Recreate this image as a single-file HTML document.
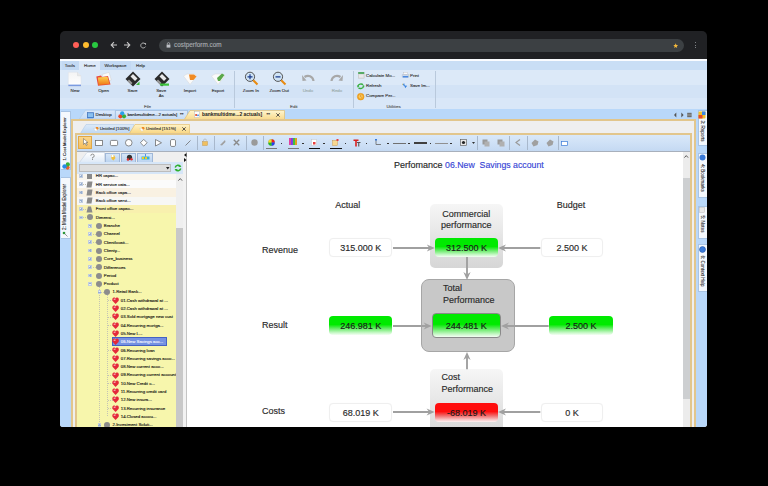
<!DOCTYPE html>
<html><head><meta charset="utf-8">
<style>
*{margin:0;padding:0;box-sizing:border-box}
html,body{width:768px;height:486px;background:#000;overflow:hidden;font-family:"Liberation Sans",sans-serif}
.a{position:absolute}
svg.a{overflow:visible}
#win{position:absolute;left:60px;top:31px;width:647px;height:396px;border-radius:5px 5px 3px 3px;overflow:hidden;background:#202124}
.t{position:absolute;white-space:nowrap;line-height:1}
.s{-webkit-text-stroke:0.12px currentColor}
.m{-webkit-text-stroke:0.15px currentColor}
</style></head><body>
<div id="win">
<div class="a" style="left:13.25px;top:11.00px;width:6.00px;height:6.00px;border-radius:50%;background:#ff5f57"></div>
<div class="a" style="left:22.80px;top:11.00px;width:6.00px;height:6.00px;border-radius:50%;background:#febc2e"></div>
<div class="a" style="left:32.00px;top:11.00px;width:6.00px;height:6.00px;border-radius:50%;background:#28c840"></div>
<svg class="a" style="left:50.00px;top:10.00px;" width="8" height="8" viewBox="0 0 8 8"><path d="M7 4H1.5M4 1.2L1.2 4L4 6.8" stroke="#c8c8c8" stroke-width="1.1" fill="none"/></svg>
<svg class="a" style="left:62.70px;top:10.00px;" width="8" height="8" viewBox="0 0 8 8"><path d="M1 4H6.5M4 1.2L6.8 4L4 6.8" stroke="#c8c8c8" stroke-width="1.1" fill="none"/></svg>
<svg class="a" style="left:79.50px;top:11.00px;" width="7" height="7" viewBox="0 0 7 7"><path d="M5.6 2.6A2.5 2.5 0 1 0 5.5 4.6" stroke="#c0c0c0" stroke-width="0.9" fill="none"/><path d="M4.3 0.9L6.1 1.2L5.8 3.1Z" fill="#c0c0c0"/></svg>
<div class="a" style="left:99.40px;top:7.70px;width:525.10px;height:13.00px;border-radius:6.5px;background:#3c4043"></div>
<svg class="a" style="left:106.00px;top:11.30px;" width="5" height="6" viewBox="0 0 5 6"><rect x="0.6" y="2.6" width="3.8" height="3" fill="#bdc1c6"/><path d="M1.3 2.6V1.8A1.2 1.2 0 0 1 3.7 1.8V2.6" stroke="#bdc1c6" stroke-width="0.7" fill="none"/></svg>
<div class="t m" style="left:114.00px;top:14.30px;font-size:6.4px;color:#a4a8ac;transform:translateY(-50%);">costperform.com</div>
<svg class="a" style="left:613.30px;top:11.60px;" width="5.4" height="5.4" viewBox="0 0 5.4 5.4"><path d="M2.7 0.3L3.4 2L5.1 2.1L3.8 3.2L4.2 4.9L2.7 4L1.2 4.9L1.6 3.2L0.3 2.1L2 2Z" fill="#f6b93b"/></svg>
<div class="a" style="left:634.50px;top:11.20px;width:1.10px;height:1.10px;border-radius:50%;background:#9a9ea2"></div>
<div class="a" style="left:634.50px;top:13.60px;width:1.10px;height:1.10px;border-radius:50%;background:#9a9ea2"></div>
<div class="a" style="left:634.50px;top:16.00px;width:1.10px;height:1.10px;border-radius:50%;background:#9a9ea2"></div>
<div class="a" style="left:0.00px;top:28.00px;width:647.00px;height:368.00px;background:#eeeeee"></div>
<div class="a" style="left:0.00px;top:28.00px;width:647.00px;height:1.50px;background:#fafcff"></div>
<div class="a" style="left:0.00px;top:29.50px;width:647.00px;height:9.00px;background:#c9def5"></div>
<div class="a" style="left:0.00px;top:38.50px;width:647.00px;height:15.00px;background:#dce9f8"></div>
<div class="a" style="left:0.00px;top:53.50px;width:647.00px;height:13.70px;background:#d3e3f6"></div>
<div class="a" style="left:0.00px;top:67.20px;width:647.00px;height:10.80px;background:#d9e7f8"></div>
<div class="a" style="left:0.00px;top:78.00px;width:647.00px;height:318.00px;background:#b9d8fa"></div>
<div class="a" style="left:1.80px;top:29.50px;width:17.00px;height:9.00px;background:#c3d9f3"></div>
<div class="a" style="left:18.80px;top:29.50px;width:21.10px;height:9.00px;background:#dde9f8"></div>
<div class="a" style="left:39.90px;top:29.50px;width:31.60px;height:9.00px;background:#c3d9f3"></div>
<div class="t s" style="left:4.70px;top:34.60px;font-size:4.4px;color:#343434;transform:translateY(-50%);">Tools</div>
<div class="t s" style="left:24.00px;top:34.60px;font-size:4.4px;color:#343434;transform:translateY(-50%);">Home</div>
<div class="t s" style="left:44.50px;top:34.60px;font-size:4.4px;color:#343434;transform:translateY(-50%);">Workspace</div>
<div class="t s" style="left:76.00px;top:34.60px;font-size:4.4px;color:#343434;transform:translateY(-50%);">Help</div>
<svg class="a" style="left:8.20px;top:40.50px;" width="14" height="15" viewBox="0 0 14 15"><defs><linearGradient id="gn" x1="0" y1="0" x2="0" y2="1"><stop offset="0" stop-color="#f4f4f4"/><stop offset="1" stop-color="#ffffff"/></linearGradient></defs><path d="M0.3 0.3H9.5L13 3.8V14.3H0.3Z" fill="url(#gn)" stroke="#dfe3ea" stroke-width="0.5"/><path d="M9.5 0.3V3.8H13" fill="#e8e8e8" stroke="#cfd3da" stroke-width="0.4"/><rect x="0.3" y="12.6" width="12.7" height="1.6" fill="#7a9be0"/></svg>
<div class="t s" style="left:15.00px;top:60.00px;font-size:4.4px;color:#343434;transform:translate(-50%,-50%);">New</div>
<svg class="a" style="left:36.00px;top:40.50px;" width="16" height="14" viewBox="0 0 16 14"><defs><linearGradient id="go" x1="0" y1="0" x2="0" y2="1"><stop offset="0" stop-color="#fcd050"/><stop offset="1" stop-color="#f07818"/></linearGradient></defs><path d="M6 2.5L13 0.3L15.3 8L9 10Z" fill="#fafafa" stroke="#c8c8c8" stroke-width="0.4"/><path d="M0.3 4.5L5 3.5L6 5L12 4L14.5 12.5L2 13.7Z" fill="#e84838"/><path d="M1.8 5.5L11.5 4.8L13.5 12L2.6 13Z" fill="url(#go)"/></svg>
<div class="t s" style="left:43.50px;top:60.00px;font-size:4.4px;color:#343434;transform:translate(-50%,-50%);">Open</div>
<svg class="a" style="left:64.50px;top:39.50px;" width="16" height="16" viewBox="0 0 16 16"><path d="M8 0.5L15.5 8L8 15.5L0.5 8Z" fill="#2a2a2a"/><path d="M8 3L12.5 7.5L10 10L5.5 5.5Z" fill="#e8e8e8"/><path d="M4 8.5L7.5 12L6 13.5L2.5 10Z" fill="#9a9a9a"/><path d="M11 14L14.5 10.5V14Z" fill="#3cb83c"/></svg>
<div class="t s" style="left:72.50px;top:60.00px;font-size:4.4px;color:#343434;transform:translate(-50%,-50%);">Save</div>
<svg class="a" style="left:93.50px;top:39.50px;" width="16" height="16" viewBox="0 0 16 16"><path d="M8 0.5L15.5 8L8 15.5L0.5 8Z" fill="#2a2a2a"/><path d="M8 3L12.5 7.5L10 10L5.5 5.5Z" fill="#e8e8e8"/><path d="M4 8.5L7.5 12L6 13.5L2.5 10Z" fill="#9a9a9a"/><rect x="6" y="12.5" width="9" height="2.2" fill="#3cc43c"/></svg>
<div class="t s" style="left:101.20px;top:60.00px;font-size:4.4px;color:#343434;transform:translate(-50%,-50%);">Save</div>
<div class="t s" style="left:101.20px;top:65.00px;font-size:4.4px;color:#343434;transform:translate(-50%,-50%);">As</div>
<svg class="a" style="left:122.50px;top:41.00px;" width="15" height="13" viewBox="0 0 15 13"><path d="M0.5 4L7 12.5L14 4L11 2H4Z" fill="#fafafa" stroke="#d6d6d6" stroke-width="0.5"/><path d="M6 2.5H11L13.5 4.5L10.5 8H7Z" fill="#f08a24"/></svg>
<div class="t s" style="left:130.00px;top:60.00px;font-size:4.4px;color:#343434;transform:translate(-50%,-50%);">Import</div>
<svg class="a" style="left:151.00px;top:41.00px;" width="15" height="13" viewBox="0 0 15 13"><path d="M0.5 4L7 12.5L14 4L11 2H4Z" fill="#fafafa" stroke="#d6d6d6" stroke-width="0.5"/><path d="M6 6L11 1.5L13.5 3L9 9H7Z" fill="#5aa84a"/></svg>
<div class="t s" style="left:158.00px;top:60.00px;font-size:4.4px;color:#343434;transform:translate(-50%,-50%);">Export</div>
<div class="t s" style="left:87.50px;top:75.80px;font-size:4.4px;color:#555;transform:translate(-50%,-50%);">File</div>
<div class="a" style="left:174.20px;top:40.00px;width:0.70px;height:36.50px;background:#b9c9dc"></div>
<svg class="a" style="left:183.50px;top:40.00px;" width="15" height="15" viewBox="0 0 15 15"><circle cx="6" cy="5.8" r="4.6" fill="#cfe3f5" stroke="#555" stroke-width="1"/><path d="M3.5 5.8H8.5" stroke="#1a3a8a" stroke-width="1.2"/><path d="M6 3.3V8.3" stroke="#1a3a8a" stroke-width="1.2"/><path d="M9.2 9.2L13.5 13.5" stroke="#e88a10" stroke-width="2"/></svg>
<div class="t s" style="left:190.80px;top:60.00px;font-size:4.4px;color:#343434;transform:translate(-50%,-50%);">Zoom In</div>
<svg class="a" style="left:212.30px;top:40.00px;" width="15" height="15" viewBox="0 0 15 15"><circle cx="6" cy="5.8" r="4.6" fill="#cfe3f5" stroke="#555" stroke-width="1"/><path d="M3.5 5.8H8.5" stroke="#1a3a8a" stroke-width="1.2"/><path d="M9.2 9.2L13.5 13.5" stroke="#e88a10" stroke-width="2"/></svg>
<div class="t s" style="left:219.20px;top:60.00px;font-size:4.4px;color:#343434;transform:translate(-50%,-50%);">Zoom Out</div>
<svg class="a" style="left:241.00px;top:41.00px;" width="14" height="12" viewBox="0 0 14 12"><path d="M12.5 9C12 4 7 2.5 3.5 5" stroke="#a8a8a8" stroke-width="2.2" fill="none"/><path d="M1 3L5.5 8.5L1.5 9Z" fill="#a8a8a8"/></svg>
<div class="t s" style="left:247.90px;top:60.00px;font-size:4.4px;color:#9aa;transform:translate(-50%,-50%);">Undo</div>
<svg class="a" style="left:270.00px;top:41.00px;" width="14" height="12" viewBox="0 0 14 12"><path d="M1.5 9C2 4 7 2.5 10.5 5" stroke="#a8a8a8" stroke-width="2.2" fill="none"/><path d="M13 3L8.5 8.5L12.5 9Z" fill="#a8a8a8"/></svg>
<div class="t s" style="left:277.00px;top:60.00px;font-size:4.4px;color:#9aa;transform:translate(-50%,-50%);">Redo</div>
<div class="t s" style="left:233.80px;top:75.80px;font-size:4.4px;color:#555;transform:translate(-50%,-50%);">Edit</div>
<div class="a" style="left:292.80px;top:40.00px;width:0.70px;height:36.50px;background:#b9c9dc"></div>
<svg class="a" style="left:298.00px;top:41.00px;" width="6.4" height="6.6" viewBox="0 0 6.4 6.6"><rect x="0.2" y="0.2" width="6" height="6.2" fill="#d6d6d8" stroke="#b8b8b8" stroke-width="0.3"/><rect x="0.2" y="0.2" width="6" height="1.6" fill="#3aa04a"/><rect x="1" y="2.6" width="4.4" height="3" fill="#e8e8ea"/></svg>
<div class="t s" style="left:306.00px;top:44.50px;font-size:4.4px;color:#343434;transform:translateY(-50%);">Calculate Mo...</div>
<svg class="a" style="left:297.00px;top:51.50px;" width="7.5" height="6.5" viewBox="0 0 7.5 6.5"><path d="M1 3.2C1.2 1.2 4.5 0.2 6 1.8" stroke="#38b040" stroke-width="1.4" fill="none"/><path d="M6.5 3.3C6.3 5.3 3 6.3 1.5 4.7" stroke="#38b040" stroke-width="1.4" fill="none"/><path d="M0.2 2.2L2.4 3.6L0.4 4.4Z" fill="#38b040"/><path d="M7.3 4.3L5.1 2.9L7.1 2.1Z" fill="#38b040"/></svg>
<div class="t s" style="left:306.00px;top:55.40px;font-size:4.4px;color:#343434;transform:translateY(-50%);">Refresh</div>
<svg class="a" style="left:297.00px;top:61.50px;" width="7.4" height="7.4" viewBox="0 0 7.4 7.4"><circle cx="3.7" cy="3.7" r="3.4" fill="#f2a624" stroke="#e08a10" stroke-width="0.4"/><circle cx="3.7" cy="3.4" r="2" fill="#f8c860"/><path d="M3.7 2V3.8L4.8 4.6" stroke="#c07010" stroke-width="0.5" fill="none"/></svg>
<div class="t s" style="left:306.00px;top:65.30px;font-size:4.4px;color:#343434;transform:translateY(-50%);">Compare Per...</div>
<svg class="a" style="left:341.50px;top:41.00px;" width="7" height="6.5" viewBox="0 0 7 6.5"><rect x="1.5" y="0.3" width="4" height="2.5" fill="#fafafa" stroke="#b0b0b0" stroke-width="0.3"/><path d="M0.3 2.5H6.7V5.2H0.3Z" fill="#cdd8e8" stroke="#9aa8bc" stroke-width="0.3"/><rect x="0.8" y="4" width="5.4" height="1.5" fill="#4a8ae0"/></svg>
<div class="t s" style="left:350.00px;top:44.50px;font-size:4.4px;color:#343434;transform:translateY(-50%);">Print</div>
<svg class="a" style="left:342.30px;top:51.80px;" width="5.5" height="5.5" viewBox="0 0 5.5 5.5"><path d="M0.3 1.5L2.2 0.3L2.8 2.5L5.2 2.8L3.2 5.2L2.5 3.2Z" fill="#3a84e0"/><path d="M0.3 0.5L1.5 1.2L0.6 2Z" fill="#f0c030"/></svg>
<div class="t s" style="left:350.00px;top:55.40px;font-size:4.4px;color:#343434;transform:translateY(-50%);">Save Im...</div>
<div class="t s" style="left:333.50px;top:75.80px;font-size:4.4px;color:#555;transform:translate(-50%,-50%);">Utilities</div>
<div class="a" style="left:375.20px;top:40.00px;width:0.70px;height:36.50px;background:#b9c9dc"></div>
<div class="a" style="left:0.50px;top:80.00px;width:10.00px;height:58.70px;background:#f4f8fd;border:0.5px solid #a9c4e4;border-left:none"></div>
<div class="a" style="left:0.50px;top:146.40px;width:10.00px;height:61.40px;background:#f4f8fd;border:0.5px solid #a9c4e4;border-left:none"></div>
<div class="t s" style="left:4.80px;top:107.60px;font-size:4.25px;color:#2a2a2a;transform:translateY(-50%);transform:translate(-50%,-50%) rotate(-90deg)">1: Cost Model Explorer</div>
<svg class="a" style="left:1.50px;top:131.20px;" width="9" height="8" viewBox="0 0 9 8"><circle cx="5.6" cy="5.6" r="2.1" fill="#e8602a"/><circle cx="5.8" cy="2.4" r="2.1" fill="#3ab03a"/><circle cx="2.6" cy="4.5" r="2.3" fill="#2a8ae8"/></svg>
<div class="t s" style="left:4.80px;top:176.40px;font-size:4.45px;color:#2a2a2a;transform:translateY(-50%);transform:translate(-50%,-50%) rotate(-90deg)">2: Meta Model Explorer</div>
<svg class="a" style="left:2.00px;top:200.00px;" width="7" height="7" viewBox="0 0 7 7"><circle cx="2" cy="2" r="1.3" fill="#2a9a3a"/><path d="M2.5 2.5L5.5 5.5" stroke="#555" stroke-width="0.6"/></svg>
<div class="a" style="left:637.50px;top:79.00px;width:9.00px;height:36.00px;background:#f4f8fd;border:0.5px solid #a9c4e4;border-right:none"></div>
<div class="a" style="left:637.50px;top:122.20px;width:9.00px;height:44.60px;background:#f4f8fd;border:0.5px solid #a9c4e4;border-right:none"></div>
<div class="a" style="left:637.50px;top:174.60px;width:9.00px;height:33.10px;background:#f4f8fd;border:0.5px solid #a9c4e4;border-right:none"></div>
<div class="a" style="left:637.50px;top:213.30px;width:9.00px;height:47.70px;background:#f4f8fd;border:0.5px solid #a9c4e4;border-right:none"></div>
<svg class="a" style="left:638.00px;top:80.00px;" width="8" height="8" viewBox="0 0 8 8"><rect x="0.5" y="0.5" width="7" height="7" rx="1" fill="#f0c030"/><rect x="0.5" y="4" width="4" height="3.5" fill="#e84a2a"/><rect x="4" y="0.5" width="3.5" height="3.5" fill="#3a8ae8"/></svg>
<div class="t s" style="left:642.00px;top:100.00px;font-size:4.5px;color:#2a2a2a;transform:translateY(-50%);transform:translate(-50%,-50%) rotate(90deg)">3: Reports</div>
<svg class="a" style="left:638.50px;top:123.30px;" width="7" height="7" viewBox="0 0 7 7"><circle cx="3.5" cy="3.5" r="3" fill="#3a7ad8"/></svg>
<div class="t s" style="left:642.00px;top:147.00px;font-size:4.5px;color:#2a2a2a;transform:translateY(-50%);transform:translate(-50%,-50%) rotate(90deg)">4: Bookmarks</div>
<svg class="a" style="left:639.00px;top:175.60px;" width="6" height="5" viewBox="0 0 6 5"><rect x="0.5" y="0.5" width="5" height="5" fill="#e8e8e8" stroke="#aaa" stroke-width="0.4"/></svg>
<div class="t s" style="left:642.00px;top:192.70px;font-size:4.5px;color:#2a2a2a;transform:translateY(-50%);transform:translate(-50%,-50%) rotate(90deg)">5: Notes</div>
<svg class="a" style="left:638.50px;top:215.00px;" width="7" height="7" viewBox="0 0 7 7"><circle cx="3.5" cy="3.5" r="3" fill="#3a7ad8" stroke="#1a4a9a" stroke-width="0.5"/></svg>
<div class="t s" style="left:642.00px;top:239.90px;font-size:4.5px;color:#2a2a2a;transform:translateY(-50%);transform:translate(-50%,-50%) rotate(90deg)">6: Context Help</div>
<svg class="a" style="left:18.50px;top:79.30px;" width="37" height="9" viewBox="0 0 37 9"><defs><linearGradient id="gt" x1="0" y1="0" x2="0" y2="1"><stop offset="0" stop-color="#dbe9fa"/><stop offset="1" stop-color="#c6dcf6"/></linearGradient></defs><path d="M0.3 9L6.5 0.3H36.2V9Z" fill="url(#gt)" stroke="#a9c4e4" stroke-width="0.5"/></svg>
<svg class="a" style="left:27.30px;top:80.50px;" width="7" height="7" viewBox="0 0 7 7"><rect x="0.3" y="0.5" width="6.4" height="5.5" fill="#4a8ad8" stroke="#2a5aa8" stroke-width="0.4"/><rect x="1" y="1.2" width="5" height="3.8" fill="#8ac0f0"/></svg>
<div class="t s" style="left:35.50px;top:84.00px;font-size:4.4px;color:#222;transform:translateY(-50%);">Desktop</div>
<div class="a" style="left:55.40px;top:79.30px;width:72.20px;height:9.00px;background:linear-gradient(#dbe9fa,#c6dcf6);border:0.5px solid #a9c4e4;border-bottom:none"></div>
<svg class="a" style="left:58.30px;top:80.00px;" width="8.5" height="8" viewBox="0 0 8.5 8"><circle cx="2.4" cy="5.3" r="2.1" fill="#e8482a"/><circle cx="6" cy="5.3" r="2.1" fill="#38b038"/><circle cx="4.2" cy="2.3" r="2.1" fill="#2aa0e8"/></svg>
<div class="t s" style="left:67.40px;top:84.00px;font-size:4.4px;color:#222;transform:translateY(-50%);">bankmultidme...2 actuals]</div>
<div class="t s" style="left:120.00px;top:83.60px;font-size:4.4px;color:#222;transform:translateY(-50%);">**</div>
<svg class="a" style="left:124.00px;top:79.00px;" width="102" height="10" viewBox="0 0 102 10"><path d="M0 10L6 0.5H100.5V10Z" fill="url(#gy)" stroke="#e0b860" stroke-width="0.6"/><defs><linearGradient id="gy" x1="0" y1="0" x2="0" y2="1"><stop offset="0" stop-color="#fff6d0"/><stop offset="1" stop-color="#f8d888"/></linearGradient></defs></svg>
<svg class="a" style="left:133.70px;top:80.20px;" width="6" height="7" viewBox="0 0 6 7"><rect x="0.5" y="0.5" width="5" height="6" fill="#fff" stroke="#aaa" stroke-width="0.4"/><rect x="1.3" y="3" width="1.6" height="2" fill="#e84a2a"/><rect x="3.2" y="3.5" width="1.6" height="1.6" fill="#3a8ae8"/></svg>
<div class="t s" style="left:141.90px;top:84.00px;font-size:4.95px;color:#1a1a1a;transform:translateY(-50%);font-weight:bold;-webkit-text-stroke:0">bankmultidme...2 actuals]</div>
<div class="t s" style="left:206.60px;top:83.60px;font-size:4.4px;color:#222;transform:translateY(-50%);">**</div>
<svg class="a" style="left:215.90px;top:82.00px;" width="4" height="4" viewBox="0 0 4 4"><path d="M0.3 0.3L3.7 3.7M3.7 0.3L0.3 3.7" stroke="#333" stroke-width="0.8"/></svg>
<svg class="a" style="left:613.00px;top:81.00px;" width="16" height="6" viewBox="0 0 16 6"><path d="M3.3 0.6L1 3L3.3 5.4Z" fill="#555"/><path d="M8.3 0.6L10.6 3L8.3 5.4Z" fill="#555"/><rect x="14.2" y="0.8" width="4.4" height="4.4" fill="#666"/><path d="M14.2 2.3H18.6M14.2 3.7H18.6" stroke="#ccc" stroke-width="0.4"/></svg>
<div class="a" style="left:11.20px;top:87.80px;width:624.60px;height:309.20px;background:#efefef;border:2.2px solid #e2c68c;border-bottom:none"></div>
<svg class="a" style="left:20.00px;top:92.80px;" width="56" height="10" viewBox="0 0 56 10"><path d="M0 10L6 0.5H54V10Z" fill="url(#gb)" stroke="#a9c4e4" stroke-width="0.5"/><defs><linearGradient id="gb" x1="0" y1="0" x2="0" y2="1"><stop offset="0" stop-color="#dceaf9"/><stop offset="1" stop-color="#bcd6f2"/></linearGradient></defs></svg>
<svg class="a" style="left:32.50px;top:94.50px;" width="6" height="6" viewBox="0 0 6 6"><path d="M0.5 2.5L3 5.5L5.5 2.5Z" fill="#fff" stroke="#bbb" stroke-width="0.3"/><path d="M2.5 1H5L5.7 2.5L4 4Z" fill="#f08a24"/></svg>
<div class="t s" style="left:39.70px;top:97.80px;font-size:4.4px;color:#333;transform:translateY(-50%);">Untitled [100%]</div>
<svg class="a" style="left:68.50px;top:92.80px;" width="62" height="10" viewBox="0 0 62 10"><path d="M0 10L6 0.5H60.5V10Z" fill="url(#gy2)" stroke="#e0b860" stroke-width="0.6"/><defs><linearGradient id="gy2" x1="0" y1="0" x2="0" y2="1"><stop offset="0" stop-color="#fff3c8"/><stop offset="1" stop-color="#f8d47c"/></linearGradient></defs></svg>
<svg class="a" style="left:79.00px;top:94.50px;" width="6" height="6" viewBox="0 0 6 6"><path d="M0.5 2.5L3 5.5L5.5 2.5Z" fill="#fff" stroke="#bbb" stroke-width="0.3"/><path d="M2.5 1H5L5.7 2.5L4 4Z" fill="#f08a24"/></svg>
<div class="t s" style="left:86.00px;top:97.80px;font-size:4.4px;color:#333;transform:translateY(-50%);">Untitled [151%]</div>
<svg class="a" style="left:121.90px;top:95.80px;" width="4" height="4" viewBox="0 0 4 4"><path d="M0.3 0.3L3.7 3.7M3.7 0.3L0.3 3.7" stroke="#333" stroke-width="0.8"/></svg>
<div class="a" style="left:14.90px;top:101.80px;width:617.20px;height:295.20px;background:#f4f4f4;border:2.1px solid #e2c68c;border-bottom:none"></div>
<div class="a" style="left:17.00px;top:103.90px;width:613.00px;height:16.90px;background:linear-gradient(#d9e8f9,#cfe1f6 50%,#c4d9f2);border-bottom:1.3px solid #a8b0bc"></div>
<div class="a" style="left:18.00px;top:104.50px;width:14.00px;height:13.70px;background:linear-gradient(#fbd68a,#f6c060);border:0.5px solid #e0a848"></div>
<svg class="a" style="left:22.00px;top:107.00px;" width="7" height="8" viewBox="0 0 7 8"><path d="M1.5 0.5V6.5L3 5L4.3 7.5L5.2 7L4 4.6H6Z" fill="#fff" stroke="#555" stroke-width="0.5"/></svg>
<svg class="a" style="left:35.40px;top:108.80px;" width="8" height="6" viewBox="0 0 8 6"><rect x="0.4" y="0.4" width="7.2" height="5.2" fill="#fff" stroke="#666" stroke-width="0.75"/></svg>
<svg class="a" style="left:50.00px;top:108.80px;" width="8" height="6" viewBox="0 0 8 6"><rect x="0.4" y="0.4" width="7.2" height="5.2" rx="1.2" fill="#fff" stroke="#666" stroke-width="0.75"/></svg>
<svg class="a" style="left:65.00px;top:108.00px;" width="7.5" height="7.5" viewBox="0 0 7.5 7.5"><circle cx="3.75" cy="3.75" r="3.3" fill="#fff" stroke="#666" stroke-width="0.75"/></svg>
<svg class="a" style="left:80.00px;top:108.00px;" width="7.5" height="7.5" viewBox="0 0 7.5 7.5"><path d="M3.75 0.4L7.1 3.75L3.75 7.1L0.4 3.75Z" fill="#fff" stroke="#666" stroke-width="0.75"/></svg>
<svg class="a" style="left:95.00px;top:108.00px;" width="7" height="7.5" viewBox="0 0 7 7.5"><path d="M0.5 0.5L6.5 3.75L0.5 7Z" fill="#fff" stroke="#666" stroke-width="0.75"/></svg>
<svg class="a" style="left:110.40px;top:107.60px;" width="6" height="8" viewBox="0 0 6 8"><path d="M0.5 1.5V6.5A2.5 1 0 0 0 5.5 6.5V1.5A2.5 1 0 0 0 0.5 1.5Z" fill="#fff" stroke="#666" stroke-width="0.75"/></svg>
<svg class="a" style="left:124.50px;top:108.50px;" width="6" height="6" viewBox="0 0 6 6"><path d="M0.5 5.5L5.5 0.5" stroke="#666" stroke-width="0.75"/></svg>
<div class="a" style="left:137.30px;top:105.00px;width:0.60px;height:13.50px;background:#a8b8cc"></div>
<div class="a" style="left:153.70px;top:105.00px;width:0.60px;height:13.50px;background:#a8b8cc"></div>
<div class="a" style="left:185.60px;top:105.00px;width:0.60px;height:13.50px;background:#a8b8cc"></div>
<div class="a" style="left:203.00px;top:105.00px;width:0.60px;height:13.50px;background:#a8b8cc"></div>
<div class="a" style="left:417.30px;top:105.00px;width:0.60px;height:13.50px;background:#a8b8cc"></div>
<div class="a" style="left:449.00px;top:105.00px;width:0.60px;height:13.50px;background:#a8b8cc"></div>
<div class="a" style="left:466.50px;top:105.00px;width:0.60px;height:13.50px;background:#a8b8cc"></div>
<div class="a" style="left:498.40px;top:105.00px;width:0.60px;height:13.50px;background:#a8b8cc"></div>
<svg class="a" style="left:142.00px;top:108.00px;" width="7" height="7" viewBox="0 0 7 7"><rect x="0.5" y="2.5" width="5" height="4" fill="#f0c060" stroke="#c09040" stroke-width="0.4"/><path d="M1.5 2.5V1.5A1.5 1.5 0 0 1 4.5 1.5" stroke="#aaa" stroke-width="0.6" fill="none"/></svg>
<svg class="a" style="left:159.00px;top:108.00px;" width="7" height="7" viewBox="0 0 7 7"><path d="M1 6L6 1L6.5 3L3 6.5Z" fill="#a0a0a0"/></svg>
<svg class="a" style="left:173.00px;top:108.20px;" width="7" height="7" viewBox="0 0 7 7"><path d="M0.8 0.8L6.2 6.2M6.2 0.8L0.8 6.2" stroke="#8a8a8a" stroke-width="1.4"/></svg>
<svg class="a" style="left:190.50px;top:108.30px;" width="7" height="7" viewBox="0 0 7 7"><circle cx="3.5" cy="3.5" r="3.2" fill="#9a9a9a"/></svg>
<svg class="a" style="left:208.40px;top:107.80px;" width="7" height="7" viewBox="0 0 7 7"><circle cx="3.5" cy="3.5" r="3.2" fill="#888"/><path d="M3.5 3.5L3.5 0.3A3.2 3.2 0 0 1 6.7 3.5Z" fill="#f02020"/><path d="M3.5 3.5L6.7 3.5A3.2 3.2 0 0 1 3.5 6.7Z" fill="#2040f0"/><path d="M3.5 3.5L3.5 6.7A3.2 3.2 0 0 1 0.3 3.5Z" fill="#20c020"/><path d="M3.5 3.5L0.3 3.5A3.2 3.2 0 0 1 3.5 0.3Z" fill="#f0e020"/></svg>
<div class="a" style="left:205.70px;top:116.60px;width:11.80px;height:1.40px;background:#777"></div>
<div class="a" style="left:220.90px;top:111.50px;width:1.60px;height:1.60px;background:#333"></div>
<svg class="a" style="left:228.80px;top:107.30px;" width="8" height="7" viewBox="0 0 8 7"><rect x="0" y="0" width="2" height="7" fill="#e040a0"/><rect x="2" y="0" width="2" height="7" fill="#8040e0"/><rect x="4" y="0" width="2" height="7" fill="#40c040"/><rect x="6" y="0" width="2" height="7" fill="#e0a020"/></svg>
<div class="a" style="left:227.50px;top:116.60px;width:11.50px;height:1.40px;background:#777"></div>
<div class="a" style="left:242.20px;top:111.50px;width:1.60px;height:1.60px;background:#333"></div>
<svg class="a" style="left:251.00px;top:107.50px;" width="6" height="7" viewBox="0 0 6 7"><rect x="0.5" y="0.5" width="5" height="6" fill="#fff" stroke="#bbb" stroke-width="0.4"/><rect x="2" y="3" width="2.5" height="2.5" fill="#e84040"/></svg>
<div class="a" style="left:248.50px;top:116.60px;width:11.50px;height:1.40px;background:#111"></div>
<div class="a" style="left:263.20px;top:111.50px;width:1.60px;height:1.60px;background:#333"></div>
<svg class="a" style="left:271.80px;top:107.50px;" width="7" height="7" viewBox="0 0 7 7"><rect x="0.5" y="1.5" width="5" height="5" fill="#f8d890" stroke="#c09040" stroke-width="0.4"/><rect x="4.5" y="0" width="2" height="2" fill="#e84040"/></svg>
<div class="a" style="left:270.00px;top:116.60px;width:11.50px;height:1.40px;background:#111"></div>
<div class="a" style="left:284.70px;top:111.50px;width:1.60px;height:1.60px;background:#333"></div>
<svg class="a" style="left:292.80px;top:107.50px;" width="8" height="8" viewBox="0 0 8 8"><path d="M0.5 0.5H5.5V2H3.8V7.5H2.2V2H0.5Z" fill="#d82020"/><path d="M4 3H7.5V4H6.3V7.5H5.2V4H4Z" fill="#555"/></svg>
<div class="a" style="left:305.70px;top:111.50px;width:1.60px;height:1.60px;background:#333"></div>
<svg class="a" style="left:314.70px;top:108.00px;" width="7" height="7" viewBox="0 0 7 7"><path d="M1 0.5V5.5H6" stroke="#666" stroke-width="0.8" fill="none"/><rect x="0" y="0" width="2" height="1.5" fill="#3a7ad8"/></svg>
<div class="a" style="left:327.00px;top:111.50px;width:1.60px;height:1.60px;background:#333"></div>
<div class="a" style="left:333.00px;top:111.70px;width:12.70px;height:1.20px;background:#707070"></div>
<div class="a" style="left:348.20px;top:111.50px;width:1.60px;height:1.60px;background:#333"></div>
<div class="a" style="left:353.90px;top:111.40px;width:12.70px;height:2.00px;background:#404040"></div>
<div class="a" style="left:369.50px;top:111.50px;width:1.60px;height:1.60px;background:#333"></div>
<div class="a" style="left:375.00px;top:112.00px;width:12.60px;height:0.70px;background:#909090"></div>
<div class="a" style="left:390.40px;top:111.50px;width:1.60px;height:1.60px;background:#333"></div>
<svg class="a" style="left:400.00px;top:107.80px;" width="7" height="7" viewBox="0 0 7 7"><rect x="0.4" y="0.4" width="6.2" height="6.2" fill="#e8e8e8" stroke="#555" stroke-width="0.6"/><circle cx="3.5" cy="3.5" r="1.6" fill="#222"/></svg>
<svg class="a" style="left:411.50px;top:111.30px;" width="3" height="2" viewBox="0 0 3 2"><path d="M0 0H3L1.5 2Z" fill="#333"/></svg>
<svg class="a" style="left:421.90px;top:107.50px;" width="8" height="8" viewBox="0 0 8 8"><rect x="0.5" y="0.5" width="5" height="5" fill="#9a9a9a"/><rect x="2.5" y="2.5" width="5" height="5" fill="#b0b0b0"/></svg>
<svg class="a" style="left:436.50px;top:107.50px;" width="8" height="8" viewBox="0 0 8 8"><rect x="0.5" y="0.5" width="5" height="5" fill="#9a9a9a"/><rect x="2.5" y="2.5" width="5" height="5" fill="#b0b0b0"/></svg>
<svg class="a" style="left:454.70px;top:107.80px;" width="6" height="7" viewBox="0 0 6 7"><path d="M5 0.5L1 3.5L5 6.5" stroke="#9a9a9a" stroke-width="1.2" fill="none"/></svg>
<svg class="a" style="left:471.00px;top:107.50px;" width="8" height="8" viewBox="0 0 8 8"><path d="M0.5 4L4 0.5L7.5 2.5L6.5 6L2.5 7.5Z" fill="#a0a0a0"/></svg>
<svg class="a" style="left:485.70px;top:107.50px;" width="8" height="8" viewBox="0 0 8 8"><path d="M0.5 4L4 0.5L7.5 2.5L6.5 6L2.5 7.5Z" fill="#a0a0a0"/></svg>
<svg class="a" style="left:501.00px;top:109.50px;" width="7" height="5" viewBox="0 0 7 5"><rect x="0.4" y="0.4" width="6.2" height="4.2" fill="#fff" stroke="#3a7ad8" stroke-width="0.7"/></svg>
<div class="a" style="left:17.00px;top:120.80px;width:106.50px;height:276.20px;background:#f7f6ac"></div>
<div class="a" style="left:17.00px;top:120.80px;width:106.50px;height:10.60px;background:#efefef"></div>
<svg class="a" style="left:19.00px;top:120.50px;" width="26" height="11" viewBox="0 0 26 11"><path d="M0 11L8 0.5H25.5V11Z" fill="url(#gw)" stroke="#b8c8dc" stroke-width="0.5"/><defs><linearGradient id="gw" x1="0" y1="0" x2="0" y2="1"><stop offset="0" stop-color="#ffffff"/><stop offset="1" stop-color="#dce8f6"/></linearGradient></defs></svg>
<svg class="a" style="left:30.00px;top:122.50px;" width="5" height="6" viewBox="0 0 5 6"><path d="M0.8 1.8A1.7 1.7 0 1 1 2.5 3.5V4.5" stroke="#777" stroke-width="0.8" fill="none"/><circle cx="2.5" cy="5.6" r="0.5" fill="#777"/></svg>
<div class="a" style="left:45.00px;top:121.50px;width:15.20px;height:9.90px;background:linear-gradient(#d6e6f8,#bcd4f0);border:0.5px solid #a0b8d8;border-bottom:none"></div>
<div class="a" style="left:61.40px;top:121.50px;width:14.90px;height:9.90px;background:linear-gradient(#d6e6f8,#bcd4f0);border:0.5px solid #a0b8d8;border-bottom:none"></div>
<div class="a" style="left:77.40px;top:121.50px;width:15.90px;height:9.90px;background:linear-gradient(#d6e6f8,#bcd4f0);border:0.5px solid #a0b8d8;border-bottom:none"></div>
<svg class="a" style="left:49.50px;top:122.80px;" width="6" height="7" viewBox="0 0 6 7"><path d="M1 1H4L5.5 4L3.5 6.5L1.5 5Z" fill="#f0c040"/><path d="M1.5 1H3.5V3H1.5Z" fill="#fff"/></svg>
<svg class="a" style="left:65.50px;top:122.80px;" width="7" height="7" viewBox="0 0 7 7"><circle cx="3.5" cy="3.3" r="2.6" fill="#333"/><circle cx="2" cy="5.5" r="1.3" fill="#e03030"/><circle cx="5.5" cy="5.2" r="1.2" fill="#e03030"/></svg>
<svg class="a" style="left:81.00px;top:123.00px;" width="9" height="6" viewBox="0 0 9 6"><rect x="0.5" y="2.5" width="8" height="3" fill="#3ab0d0"/><rect x="1" y="3" width="2" height="2" fill="#f0d020"/><rect x="4" y="3" width="2" height="2" fill="#f0d020"/><path d="M4.5 0V2.5" stroke="#3a7ad8" stroke-width="0.8"/></svg>
<div class="a" style="left:16.50px;top:140.75px;width:99.50px;height:8.30px;background:#faf6ee"></div>
<div class="a" style="left:16.50px;top:149.05px;width:99.50px;height:8.30px;background:#fbfbfb"></div>
<div class="a" style="left:16.50px;top:157.35px;width:99.50px;height:8.30px;background:#f9f1e2"></div>
<div class="a" style="left:16.50px;top:165.65px;width:99.50px;height:8.30px;background:#f7f7f5"></div>
<div class="a" style="left:16.50px;top:173.95px;width:99.50px;height:8.30px;background:#f8f0ae"></div>
<div class="a" style="left:20.80px;top:141.00px;width:0.60px;height:256.00px;background:repeating-linear-gradient(#c4c4b4 0 1px,transparent 1px 2px)"></div>
<div class="a" style="left:29.70px;top:189.40px;width:0.60px;height:63.40px;background:repeating-linear-gradient(#c4c4b4 0 1px,transparent 1px 2px)"></div>
<div class="a" style="left:39.30px;top:255.80px;width:0.60px;height:138.10px;background:repeating-linear-gradient(#c4c4b4 0 1px,transparent 1px 2px)"></div>
<div class="a" style="left:47.30px;top:264.10px;width:0.60px;height:121.50px;background:repeating-linear-gradient(#c4c4b4 0 1px,transparent 1px 2px)"></div>
<div class="a" style="left:22.60px;top:144.90px;width:4.10px;height:0.60px;background:repeating-linear-gradient(90deg,#c4c4b4 0 1px,transparent 1px 2px)"></div>
<div class="a" style="left:19.20px;top:143.00px;width:3.80px;height:3.80px;background:#e9eff7;border:0.4px solid #c2cee0"></div>
<div class="a" style="left:19.90px;top:144.55px;width:2.40px;height:0.70px;background:#98aed0"></div>
<div class="a" style="left:20.75px;top:143.70px;width:0.70px;height:2.40px;background:#98aed0"></div>
<div class="a" style="left:26.90px;top:141.90px;width:5.60px;height:6.20px;background:#8a8a8a"></div>
<div class="t s" style="left:35.80px;top:145.20px;font-size:4.3px;color:#101010;transform:translateY(-50%);">HR capac...</div>
<div class="a" style="left:22.60px;top:153.20px;width:4.10px;height:0.60px;background:repeating-linear-gradient(90deg,#c4c4b4 0 1px,transparent 1px 2px)"></div>
<div class="a" style="left:19.20px;top:151.30px;width:3.80px;height:3.80px;background:#e9eff7;border:0.4px solid #c2cee0"></div>
<div class="a" style="left:19.90px;top:152.85px;width:2.40px;height:0.70px;background:#98aed0"></div>
<div class="a" style="left:20.75px;top:152.00px;width:0.70px;height:2.40px;background:#98aed0"></div>
<svg class="a" style="left:26.20px;top:149.70px;" width="7" height="7" viewBox="0 0 7 7"><path d="M1.5 0.5H6.5L5.5 6.5H0.5Z" fill="#8a8a8a"/></svg>
<div class="t s" style="left:35.80px;top:153.50px;font-size:4.3px;color:#101010;transform:translateY(-50%);">HR service cata...</div>
<div class="a" style="left:22.60px;top:161.50px;width:4.10px;height:0.60px;background:repeating-linear-gradient(90deg,#c4c4b4 0 1px,transparent 1px 2px)"></div>
<div class="a" style="left:19.20px;top:159.60px;width:3.80px;height:3.80px;background:#e9eff7;border:0.4px solid #c2cee0"></div>
<div class="a" style="left:19.90px;top:161.15px;width:2.40px;height:0.70px;background:#98aed0"></div>
<div class="a" style="left:20.75px;top:160.30px;width:0.70px;height:2.40px;background:#98aed0"></div>
<svg class="a" style="left:26.20px;top:158.00px;" width="7" height="7" viewBox="0 0 7 7"><path d="M1.5 0.5H6.5L5.5 6.5H0.5Z" fill="#8a8a8a"/></svg>
<div class="t s" style="left:35.80px;top:161.80px;font-size:4.3px;color:#101010;transform:translateY(-50%);">Back office capa...</div>
<div class="a" style="left:22.60px;top:169.80px;width:4.10px;height:0.60px;background:repeating-linear-gradient(90deg,#c4c4b4 0 1px,transparent 1px 2px)"></div>
<div class="a" style="left:19.20px;top:167.90px;width:3.80px;height:3.80px;background:#e9eff7;border:0.4px solid #c2cee0"></div>
<div class="a" style="left:19.90px;top:169.45px;width:2.40px;height:0.70px;background:#98aed0"></div>
<div class="a" style="left:20.75px;top:168.60px;width:0.70px;height:2.40px;background:#98aed0"></div>
<svg class="a" style="left:26.20px;top:166.30px;" width="7" height="7" viewBox="0 0 7 7"><path d="M1.5 0.5H6.5L5.5 6.5H0.5Z" fill="#8a8a8a"/></svg>
<div class="t s" style="left:35.80px;top:170.10px;font-size:4.3px;color:#101010;transform:translateY(-50%);">Back office servi...</div>
<div class="a" style="left:22.60px;top:178.10px;width:4.10px;height:0.60px;background:repeating-linear-gradient(90deg,#c4c4b4 0 1px,transparent 1px 2px)"></div>
<div class="a" style="left:19.20px;top:176.20px;width:3.80px;height:3.80px;background:#e9eff7;border:0.4px solid #c2cee0"></div>
<div class="a" style="left:19.90px;top:177.75px;width:2.40px;height:0.70px;background:#98aed0"></div>
<div class="a" style="left:20.75px;top:176.90px;width:0.70px;height:2.40px;background:#98aed0"></div>
<svg class="a" style="left:26.20px;top:174.60px;" width="7" height="7" viewBox="0 0 7 7"><path d="M2 0.5H5L6.5 6.5H0.5Z" fill="#8a8a8a"/></svg>
<div class="t s" style="left:35.80px;top:178.40px;font-size:4.3px;color:#101010;transform:translateY(-50%);">Front office capac...</div>
<div class="a" style="left:22.60px;top:186.40px;width:4.10px;height:0.60px;background:repeating-linear-gradient(90deg,#c4c4b4 0 1px,transparent 1px 2px)"></div>
<div class="a" style="left:19.20px;top:184.50px;width:3.80px;height:3.80px;background:#e9eff7;border:0.4px solid #c2cee0"></div>
<div class="a" style="left:19.90px;top:186.05px;width:2.40px;height:0.70px;background:#98aed0"></div>
<div class="a" style="left:26.70px;top:183.40px;width:6.00px;height:6.00px;border-radius:50%;background:#8c8c8c"></div>
<div class="t s" style="left:35.80px;top:186.70px;font-size:4.3px;color:#101010;transform:translateY(-50%);">Dimensi...</div>
<div class="a" style="left:31.40px;top:194.70px;width:4.50px;height:0.60px;background:repeating-linear-gradient(90deg,#c4c4b4 0 1px,transparent 1px 2px)"></div>
<div class="a" style="left:28.00px;top:192.80px;width:3.80px;height:3.80px;background:#e9eff7;border:0.4px solid #c2cee0"></div>
<div class="a" style="left:28.70px;top:194.35px;width:2.40px;height:0.70px;background:#98aed0"></div>
<div class="a" style="left:29.55px;top:193.50px;width:0.70px;height:2.40px;background:#98aed0"></div>
<div class="a" style="left:35.90px;top:191.70px;width:6.00px;height:6.00px;border-radius:50%;background:#8c8c8c"></div>
<div class="t s" style="left:43.80px;top:195.00px;font-size:4.3px;color:#101010;transform:translateY(-50%);">Branche</div>
<div class="a" style="left:31.40px;top:203.00px;width:4.50px;height:0.60px;background:repeating-linear-gradient(90deg,#c4c4b4 0 1px,transparent 1px 2px)"></div>
<div class="a" style="left:28.00px;top:201.10px;width:3.80px;height:3.80px;background:#e9eff7;border:0.4px solid #c2cee0"></div>
<div class="a" style="left:28.70px;top:202.65px;width:2.40px;height:0.70px;background:#98aed0"></div>
<div class="a" style="left:29.55px;top:201.80px;width:0.70px;height:2.40px;background:#98aed0"></div>
<div class="a" style="left:35.90px;top:200.00px;width:6.00px;height:6.00px;border-radius:50%;background:#8c8c8c"></div>
<div class="t s" style="left:43.80px;top:203.30px;font-size:4.3px;color:#101010;transform:translateY(-50%);">Channel</div>
<div class="a" style="left:31.40px;top:211.30px;width:4.50px;height:0.60px;background:repeating-linear-gradient(90deg,#c4c4b4 0 1px,transparent 1px 2px)"></div>
<div class="a" style="left:28.00px;top:209.40px;width:3.80px;height:3.80px;background:#e9eff7;border:0.4px solid #c2cee0"></div>
<div class="a" style="left:28.70px;top:210.95px;width:2.40px;height:0.70px;background:#98aed0"></div>
<div class="a" style="left:29.55px;top:210.10px;width:0.70px;height:2.40px;background:#98aed0"></div>
<div class="a" style="left:35.90px;top:208.30px;width:6.00px;height:6.00px;border-radius:50%;background:#8c8c8c"></div>
<div class="t s" style="left:43.80px;top:211.60px;font-size:4.3px;color:#101010;transform:translateY(-50%);">Clientlocati...</div>
<div class="a" style="left:31.40px;top:219.60px;width:4.50px;height:0.60px;background:repeating-linear-gradient(90deg,#c4c4b4 0 1px,transparent 1px 2px)"></div>
<div class="a" style="left:28.00px;top:217.70px;width:3.80px;height:3.80px;background:#e9eff7;border:0.4px solid #c2cee0"></div>
<div class="a" style="left:28.70px;top:219.25px;width:2.40px;height:0.70px;background:#98aed0"></div>
<div class="a" style="left:29.55px;top:218.40px;width:0.70px;height:2.40px;background:#98aed0"></div>
<div class="a" style="left:35.90px;top:216.60px;width:6.00px;height:6.00px;border-radius:50%;background:#8c8c8c"></div>
<div class="t s" style="left:43.80px;top:219.90px;font-size:4.3px;color:#101010;transform:translateY(-50%);">Clienty...</div>
<div class="a" style="left:31.40px;top:227.90px;width:4.50px;height:0.60px;background:repeating-linear-gradient(90deg,#c4c4b4 0 1px,transparent 1px 2px)"></div>
<div class="a" style="left:28.00px;top:226.00px;width:3.80px;height:3.80px;background:#e9eff7;border:0.4px solid #c2cee0"></div>
<div class="a" style="left:28.70px;top:227.55px;width:2.40px;height:0.70px;background:#98aed0"></div>
<div class="a" style="left:29.55px;top:226.70px;width:0.70px;height:2.40px;background:#98aed0"></div>
<div class="a" style="left:35.90px;top:224.90px;width:6.00px;height:6.00px;border-radius:50%;background:#8c8c8c"></div>
<div class="t s" style="left:43.80px;top:228.20px;font-size:4.3px;color:#101010;transform:translateY(-50%);">Core_business</div>
<div class="a" style="left:31.40px;top:236.20px;width:4.50px;height:0.60px;background:repeating-linear-gradient(90deg,#c4c4b4 0 1px,transparent 1px 2px)"></div>
<div class="a" style="left:28.00px;top:234.30px;width:3.80px;height:3.80px;background:#e9eff7;border:0.4px solid #c2cee0"></div>
<div class="a" style="left:28.70px;top:235.85px;width:2.40px;height:0.70px;background:#98aed0"></div>
<div class="a" style="left:29.55px;top:235.00px;width:0.70px;height:2.40px;background:#98aed0"></div>
<div class="a" style="left:35.90px;top:233.20px;width:6.00px;height:6.00px;border-radius:50%;background:#8c8c8c"></div>
<div class="t s" style="left:43.80px;top:236.50px;font-size:4.3px;color:#101010;transform:translateY(-50%);">Differences</div>
<div class="a" style="left:31.40px;top:244.50px;width:4.50px;height:0.60px;background:repeating-linear-gradient(90deg,#c4c4b4 0 1px,transparent 1px 2px)"></div>
<div class="a" style="left:28.00px;top:242.60px;width:3.80px;height:3.80px;background:#e9eff7;border:0.4px solid #c2cee0"></div>
<div class="a" style="left:28.70px;top:244.15px;width:2.40px;height:0.70px;background:#98aed0"></div>
<div class="a" style="left:29.55px;top:243.30px;width:0.70px;height:2.40px;background:#98aed0"></div>
<div class="a" style="left:35.90px;top:241.50px;width:6.00px;height:6.00px;border-radius:50%;background:#8c8c8c"></div>
<div class="t s" style="left:43.80px;top:244.80px;font-size:4.3px;color:#101010;transform:translateY(-50%);">Period</div>
<div class="a" style="left:31.40px;top:252.80px;width:4.50px;height:0.60px;background:repeating-linear-gradient(90deg,#c4c4b4 0 1px,transparent 1px 2px)"></div>
<div class="a" style="left:28.00px;top:250.90px;width:3.80px;height:3.80px;background:#e9eff7;border:0.4px solid #c2cee0"></div>
<div class="a" style="left:28.70px;top:252.45px;width:2.40px;height:0.70px;background:#98aed0"></div>
<div class="a" style="left:35.90px;top:249.80px;width:6.00px;height:6.00px;border-radius:50%;background:#8c8c8c"></div>
<div class="t s" style="left:43.80px;top:253.10px;font-size:4.3px;color:#101010;transform:translateY(-50%);">Product</div>
<div class="a" style="left:40.90px;top:261.10px;width:3.30px;height:0.60px;background:repeating-linear-gradient(90deg,#c4c4b4 0 1px,transparent 1px 2px)"></div>
<div class="a" style="left:37.50px;top:259.20px;width:3.80px;height:3.80px;background:#e9eff7;border:0.4px solid #c2cee0"></div>
<div class="a" style="left:38.20px;top:260.75px;width:2.40px;height:0.70px;background:#98aed0"></div>
<div class="a" style="left:44.20px;top:258.10px;width:6.00px;height:6.00px;border-radius:50%;background:#8c8c8c"></div>
<div class="t s" style="left:52.60px;top:261.40px;font-size:4.3px;color:#101010;transform:translateY(-50%);">1.Retail Bank...</div>
<div class="a" style="left:47.50px;top:269.40px;width:5.00px;height:0.60px;background:repeating-linear-gradient(90deg,#c4c4b4 0 1px,transparent 1px 2px)"></div>
<svg class="a" style="left:52.10px;top:265.80px;" width="7.2" height="7.2" viewBox="0 0 7.2 7.2"><path d="M3.6 7L0.7 3.9C-0.2 2.6 0.5 0.4 2.1 0.4C2.9 0.4 3.4 0.9 3.6 1.5C3.8 0.9 4.3 0.4 5.1 0.4C6.7 0.4 7.4 2.6 6.5 3.9Z" fill="#e42a3a"/><ellipse cx="2.6" cy="2.3" rx="1.1" ry="0.8" fill="#f6a6b0"/></svg>
<div class="t s" style="left:60.80px;top:269.70px;font-size:4.3px;color:#101010;transform:translateY(-50%);">01.Cash withdrawal at ...</div>
<div class="a" style="left:47.50px;top:277.70px;width:5.00px;height:0.60px;background:repeating-linear-gradient(90deg,#c4c4b4 0 1px,transparent 1px 2px)"></div>
<svg class="a" style="left:52.10px;top:274.10px;" width="7.2" height="7.2" viewBox="0 0 7.2 7.2"><path d="M3.6 7L0.7 3.9C-0.2 2.6 0.5 0.4 2.1 0.4C2.9 0.4 3.4 0.9 3.6 1.5C3.8 0.9 4.3 0.4 5.1 0.4C6.7 0.4 7.4 2.6 6.5 3.9Z" fill="#e42a3a"/><ellipse cx="2.6" cy="2.3" rx="1.1" ry="0.8" fill="#f6a6b0"/></svg>
<div class="t s" style="left:60.80px;top:278.00px;font-size:4.3px;color:#101010;transform:translateY(-50%);">02.Cash withdrawal at ...</div>
<div class="a" style="left:47.50px;top:286.00px;width:5.00px;height:0.60px;background:repeating-linear-gradient(90deg,#c4c4b4 0 1px,transparent 1px 2px)"></div>
<svg class="a" style="left:52.10px;top:282.40px;" width="7.2" height="7.2" viewBox="0 0 7.2 7.2"><path d="M3.6 7L0.7 3.9C-0.2 2.6 0.5 0.4 2.1 0.4C2.9 0.4 3.4 0.9 3.6 1.5C3.8 0.9 4.3 0.4 5.1 0.4C6.7 0.4 7.4 2.6 6.5 3.9Z" fill="#e42a3a"/><ellipse cx="2.6" cy="2.3" rx="1.1" ry="0.8" fill="#f6a6b0"/></svg>
<div class="t s" style="left:60.80px;top:286.30px;font-size:4.3px;color:#101010;transform:translateY(-50%);">03.Sold mortgage new cust</div>
<div class="a" style="left:47.50px;top:294.30px;width:5.00px;height:0.60px;background:repeating-linear-gradient(90deg,#c4c4b4 0 1px,transparent 1px 2px)"></div>
<svg class="a" style="left:52.10px;top:290.70px;" width="7.2" height="7.2" viewBox="0 0 7.2 7.2"><path d="M3.6 7L0.7 3.9C-0.2 2.6 0.5 0.4 2.1 0.4C2.9 0.4 3.4 0.9 3.6 1.5C3.8 0.9 4.3 0.4 5.1 0.4C6.7 0.4 7.4 2.6 6.5 3.9Z" fill="#e42a3a"/><ellipse cx="2.6" cy="2.3" rx="1.1" ry="0.8" fill="#f6a6b0"/></svg>
<div class="t s" style="left:60.80px;top:294.60px;font-size:4.3px;color:#101010;transform:translateY(-50%);">04.Recurring mortga...</div>
<div class="a" style="left:47.50px;top:302.60px;width:5.00px;height:0.60px;background:repeating-linear-gradient(90deg,#c4c4b4 0 1px,transparent 1px 2px)"></div>
<svg class="a" style="left:52.10px;top:299.00px;" width="7.2" height="7.2" viewBox="0 0 7.2 7.2"><path d="M3.6 7L0.7 3.9C-0.2 2.6 0.5 0.4 2.1 0.4C2.9 0.4 3.4 0.9 3.6 1.5C3.8 0.9 4.3 0.4 5.1 0.4C6.7 0.4 7.4 2.6 6.5 3.9Z" fill="#e42a3a"/><ellipse cx="2.6" cy="2.3" rx="1.1" ry="0.8" fill="#f6a6b0"/></svg>
<div class="t s" style="left:60.80px;top:302.90px;font-size:4.3px;color:#101010;transform:translateY(-50%);">05.New L...</div>
<div class="a" style="left:52.00px;top:306.40px;width:54.70px;height:8.50px;background:#7592e2;border:0.8px solid #4462c4"></div>
<div class="a" style="left:47.50px;top:310.90px;width:5.00px;height:0.60px;background:repeating-linear-gradient(90deg,#c4c4b4 0 1px,transparent 1px 2px)"></div>
<svg class="a" style="left:52.10px;top:307.30px;" width="7.2" height="7.2" viewBox="0 0 7.2 7.2"><path d="M3.6 7L0.7 3.9C-0.2 2.6 0.5 0.4 2.1 0.4C2.9 0.4 3.4 0.9 3.6 1.5C3.8 0.9 4.3 0.4 5.1 0.4C6.7 0.4 7.4 2.6 6.5 3.9Z" fill="#e42a3a"/><ellipse cx="2.6" cy="2.3" rx="1.1" ry="0.8" fill="#f6a6b0"/></svg>
<div class="t s" style="left:60.80px;top:311.20px;font-size:4.3px;color:#f4f6ff;transform:translateY(-50%);">06.New Savings acc...</div>
<div class="a" style="left:47.50px;top:319.20px;width:5.00px;height:0.60px;background:repeating-linear-gradient(90deg,#c4c4b4 0 1px,transparent 1px 2px)"></div>
<svg class="a" style="left:52.10px;top:315.60px;" width="7.2" height="7.2" viewBox="0 0 7.2 7.2"><path d="M3.6 7L0.7 3.9C-0.2 2.6 0.5 0.4 2.1 0.4C2.9 0.4 3.4 0.9 3.6 1.5C3.8 0.9 4.3 0.4 5.1 0.4C6.7 0.4 7.4 2.6 6.5 3.9Z" fill="#e42a3a"/><ellipse cx="2.6" cy="2.3" rx="1.1" ry="0.8" fill="#f6a6b0"/></svg>
<div class="t s" style="left:60.80px;top:319.50px;font-size:4.3px;color:#101010;transform:translateY(-50%);">06.Recurring loan</div>
<div class="a" style="left:47.50px;top:327.50px;width:5.00px;height:0.60px;background:repeating-linear-gradient(90deg,#c4c4b4 0 1px,transparent 1px 2px)"></div>
<svg class="a" style="left:52.10px;top:323.90px;" width="7.2" height="7.2" viewBox="0 0 7.2 7.2"><path d="M3.6 7L0.7 3.9C-0.2 2.6 0.5 0.4 2.1 0.4C2.9 0.4 3.4 0.9 3.6 1.5C3.8 0.9 4.3 0.4 5.1 0.4C6.7 0.4 7.4 2.6 6.5 3.9Z" fill="#e42a3a"/><ellipse cx="2.6" cy="2.3" rx="1.1" ry="0.8" fill="#f6a6b0"/></svg>
<div class="t s" style="left:60.80px;top:327.80px;font-size:4.3px;color:#101010;transform:translateY(-50%);">07.Recurring savings acco...</div>
<div class="a" style="left:47.50px;top:335.80px;width:5.00px;height:0.60px;background:repeating-linear-gradient(90deg,#c4c4b4 0 1px,transparent 1px 2px)"></div>
<svg class="a" style="left:52.10px;top:332.20px;" width="7.2" height="7.2" viewBox="0 0 7.2 7.2"><path d="M3.6 7L0.7 3.9C-0.2 2.6 0.5 0.4 2.1 0.4C2.9 0.4 3.4 0.9 3.6 1.5C3.8 0.9 4.3 0.4 5.1 0.4C6.7 0.4 7.4 2.6 6.5 3.9Z" fill="#e42a3a"/><ellipse cx="2.6" cy="2.3" rx="1.1" ry="0.8" fill="#f6a6b0"/></svg>
<div class="t s" style="left:60.80px;top:336.10px;font-size:4.3px;color:#101010;transform:translateY(-50%);">08.New current acco...</div>
<div class="a" style="left:47.50px;top:344.10px;width:5.00px;height:0.60px;background:repeating-linear-gradient(90deg,#c4c4b4 0 1px,transparent 1px 2px)"></div>
<svg class="a" style="left:52.10px;top:340.50px;" width="7.2" height="7.2" viewBox="0 0 7.2 7.2"><path d="M3.6 7L0.7 3.9C-0.2 2.6 0.5 0.4 2.1 0.4C2.9 0.4 3.4 0.9 3.6 1.5C3.8 0.9 4.3 0.4 5.1 0.4C6.7 0.4 7.4 2.6 6.5 3.9Z" fill="#e42a3a"/><ellipse cx="2.6" cy="2.3" rx="1.1" ry="0.8" fill="#f6a6b0"/></svg>
<div class="t s" style="left:60.80px;top:344.40px;font-size:4.3px;color:#101010;transform:translateY(-50%);">09.Recurring current account</div>
<div class="a" style="left:47.50px;top:352.40px;width:5.00px;height:0.60px;background:repeating-linear-gradient(90deg,#c4c4b4 0 1px,transparent 1px 2px)"></div>
<svg class="a" style="left:52.10px;top:348.80px;" width="7.2" height="7.2" viewBox="0 0 7.2 7.2"><path d="M3.6 7L0.7 3.9C-0.2 2.6 0.5 0.4 2.1 0.4C2.9 0.4 3.4 0.9 3.6 1.5C3.8 0.9 4.3 0.4 5.1 0.4C6.7 0.4 7.4 2.6 6.5 3.9Z" fill="#e42a3a"/><ellipse cx="2.6" cy="2.3" rx="1.1" ry="0.8" fill="#f6a6b0"/></svg>
<div class="t s" style="left:60.80px;top:352.70px;font-size:4.3px;color:#101010;transform:translateY(-50%);">10.New Credit c...</div>
<div class="a" style="left:47.50px;top:360.70px;width:5.00px;height:0.60px;background:repeating-linear-gradient(90deg,#c4c4b4 0 1px,transparent 1px 2px)"></div>
<svg class="a" style="left:52.10px;top:357.10px;" width="7.2" height="7.2" viewBox="0 0 7.2 7.2"><path d="M3.6 7L0.7 3.9C-0.2 2.6 0.5 0.4 2.1 0.4C2.9 0.4 3.4 0.9 3.6 1.5C3.8 0.9 4.3 0.4 5.1 0.4C6.7 0.4 7.4 2.6 6.5 3.9Z" fill="#e42a3a"/><ellipse cx="2.6" cy="2.3" rx="1.1" ry="0.8" fill="#f6a6b0"/></svg>
<div class="t s" style="left:60.80px;top:361.00px;font-size:4.3px;color:#101010;transform:translateY(-50%);">11.Recurring credit card</div>
<div class="a" style="left:47.50px;top:369.00px;width:5.00px;height:0.60px;background:repeating-linear-gradient(90deg,#c4c4b4 0 1px,transparent 1px 2px)"></div>
<svg class="a" style="left:52.10px;top:365.40px;" width="7.2" height="7.2" viewBox="0 0 7.2 7.2"><path d="M3.6 7L0.7 3.9C-0.2 2.6 0.5 0.4 2.1 0.4C2.9 0.4 3.4 0.9 3.6 1.5C3.8 0.9 4.3 0.4 5.1 0.4C6.7 0.4 7.4 2.6 6.5 3.9Z" fill="#e42a3a"/><ellipse cx="2.6" cy="2.3" rx="1.1" ry="0.8" fill="#f6a6b0"/></svg>
<div class="t s" style="left:60.80px;top:369.30px;font-size:4.3px;color:#101010;transform:translateY(-50%);">12.New insura...</div>
<div class="a" style="left:47.50px;top:377.30px;width:5.00px;height:0.60px;background:repeating-linear-gradient(90deg,#c4c4b4 0 1px,transparent 1px 2px)"></div>
<svg class="a" style="left:52.10px;top:373.70px;" width="7.2" height="7.2" viewBox="0 0 7.2 7.2"><path d="M3.6 7L0.7 3.9C-0.2 2.6 0.5 0.4 2.1 0.4C2.9 0.4 3.4 0.9 3.6 1.5C3.8 0.9 4.3 0.4 5.1 0.4C6.7 0.4 7.4 2.6 6.5 3.9Z" fill="#e42a3a"/><ellipse cx="2.6" cy="2.3" rx="1.1" ry="0.8" fill="#f6a6b0"/></svg>
<div class="t s" style="left:60.80px;top:377.60px;font-size:4.3px;color:#101010;transform:translateY(-50%);">13.Recurring insurance</div>
<div class="a" style="left:47.50px;top:385.60px;width:5.00px;height:0.60px;background:repeating-linear-gradient(90deg,#c4c4b4 0 1px,transparent 1px 2px)"></div>
<svg class="a" style="left:52.10px;top:382.00px;" width="7.2" height="7.2" viewBox="0 0 7.2 7.2"><path d="M3.6 7L0.7 3.9C-0.2 2.6 0.5 0.4 2.1 0.4C2.9 0.4 3.4 0.9 3.6 1.5C3.8 0.9 4.3 0.4 5.1 0.4C6.7 0.4 7.4 2.6 6.5 3.9Z" fill="#e42a3a"/><ellipse cx="2.6" cy="2.3" rx="1.1" ry="0.8" fill="#f6a6b0"/></svg>
<div class="t s" style="left:60.80px;top:385.90px;font-size:4.3px;color:#101010;transform:translateY(-50%);">14.Closed accou...</div>
<div class="a" style="left:40.90px;top:393.90px;width:3.30px;height:0.60px;background:repeating-linear-gradient(90deg,#c4c4b4 0 1px,transparent 1px 2px)"></div>
<div class="a" style="left:37.50px;top:392.00px;width:3.80px;height:3.80px;background:#e9eff7;border:0.4px solid #c2cee0"></div>
<div class="a" style="left:38.20px;top:393.55px;width:2.40px;height:0.70px;background:#98aed0"></div>
<div class="a" style="left:39.05px;top:392.70px;width:0.70px;height:2.40px;background:#98aed0"></div>
<div class="a" style="left:44.20px;top:390.90px;width:6.00px;height:6.00px;border-radius:50%;background:#8c8c8c"></div>
<div class="t s" style="left:52.60px;top:394.20px;font-size:4.3px;color:#101010;transform:translateY(-50%);">2.Investment Soluti...</div>
<div class="a" style="left:16.50px;top:131.40px;width:107.00px;height:11.60px;background:#d6e6f8"></div>
<div class="a" style="left:19.30px;top:132.90px;width:91.40px;height:8.30px;background:#dedede;border:0.6px solid #bcbcbc"></div>
<svg class="a" style="left:106.00px;top:136.00px;" width="3.5" height="2.5" viewBox="0 0 3.5 2.5"><path d="M0 0H3.5L1.75 2.5Z" fill="#222"/></svg>
<svg class="a" style="left:113.70px;top:133.00px;" width="8" height="8" viewBox="0 0 8 8"><path d="M1.2 3.5A3 3 0 0 1 6.6 2.6M6.8 4.5A3 3 0 0 1 1.4 5.4" stroke="#30b030" stroke-width="1.5" fill="none"/><path d="M5 0.5L7.5 3H4.5Z" fill="#30b030"/><path d="M3 7.5L0.5 5H3.5Z" fill="#30b030"/></svg>
<div class="a" style="left:115.50px;top:143.00px;width:7.50px;height:254.00px;background:#efefef"></div>
<div class="a" style="left:115.80px;top:197.00px;width:6.90px;height:200.00px;background:#c8c8c8"></div>
<svg class="a" style="left:117.50px;top:146.50px;" width="4.5" height="3" viewBox="0 0 4.5 3"><path d="M0.4 2.6L2.25 0.6L4.1 2.6" stroke="#333" stroke-width="0.8" fill="none"/></svg>
<div class="a" style="left:123.00px;top:120.80px;width:4.00px;height:276.20px;background:#f2f2f2;border-right:1.6px solid #c4c4c4"></div>
<svg class="a" style="left:123.80px;top:122.00px;" width="2.5" height="9" viewBox="0 0 2.5 9"><path d="M2.5 0L0 2L2.5 4Z" fill="#111"/><path d="M0 5L2.5 7L0 9Z" fill="#111"/></svg>
<div class="a" style="left:127.00px;top:120.80px;width:496.00px;height:276.20px;background:#fff"></div>
<div class="a" style="left:623.00px;top:120.80px;width:6.80px;height:276.20px;background:#ececec"></div>
<div class="a" style="left:623.30px;top:147.00px;width:6.50px;height:221.00px;background:#cdcfd1"></div>
<svg class="a" style="left:624.40px;top:123.50px;" width="4.5" height="3" viewBox="0 0 4.5 3"><path d="M0.4 2.6L2.25 0.6L4.1 2.6" stroke="#333" stroke-width="0.8" fill="none"/></svg>
<div class="t m" style="left:334.00px;top:133.80px;font-size:9px;color:#262626;transform:translateY(-50%);">Perfomance <span style="color:#3846d6;font-size:8.75px">06.New&nbsp; Savings account</span></div>
<div class="t m" style="left:287.80px;top:174.00px;font-size:9px;color:#2a2a2a;transform:translate(-50%,-50%);">Actual</div>
<div class="t m" style="left:511.00px;top:174.00px;font-size:9px;color:#2a2a2a;transform:translate(-50%,-50%);">Budget</div>
<div class="t m" style="left:202.00px;top:218.90px;font-size:9px;color:#2a2a2a;transform:translateY(-50%);">Revenue</div>
<div class="t m" style="left:202.00px;top:293.70px;font-size:9px;color:#2a2a2a;transform:translateY(-50%);">Result</div>
<div class="t m" style="left:202.00px;top:380.20px;font-size:9px;color:#2a2a2a;transform:translateY(-50%);">Costs</div>
<div class="a" style="left:369.70px;top:173.20px;width:73.30px;height:63.60px;background:linear-gradient(#f6f6f6,#e2e2e2 60%,#d6d6d6);border-radius:5px"></div>
<div class="t m" style="left:406.30px;top:182.60px;font-size:9px;color:#2a2a2a;transform:translate(-50%,-50%);">Commercial</div>
<div class="t m" style="left:406.30px;top:193.60px;font-size:9px;color:#2a2a2a;transform:translate(-50%,-50%);">performance</div>
<div class="a" style="left:360.50px;top:248.40px;width:94.80px;height:73.00px;background:#c8c8c8;border:1.3px solid #a6a6a6;border-radius:8px"></div>
<div class="t m" style="left:383.00px;top:257.40px;font-size:9px;color:#2a2a2a;transform:translateY(-50%);">Total</div>
<div class="t m" style="left:383.00px;top:268.80px;font-size:9px;color:#2a2a2a;transform:translateY(-50%);">Performance</div>
<div class="a" style="left:369.70px;top:338.40px;width:73.30px;height:70.60px;background:linear-gradient(#f6f6f6,#e2e2e2 60%,#d6d6d6);border-radius:5px"></div>
<div class="t m" style="left:381.60px;top:346.40px;font-size:9px;color:#2a2a2a;transform:translateY(-50%);">Cost</div>
<div class="t m" style="left:381.60px;top:357.90px;font-size:9px;color:#2a2a2a;transform:translateY(-50%);">Performance</div>
<div class="a" style="left:269.00px;top:207.40px;width:63.40px;height:19.00px;background:#fff;border:0.7px solid #efefef;border-radius:4px;box-shadow:0 0 1px #f6f6f6"></div>
<div class="t m" style="left:300.70px;top:217.10px;font-size:9px;color:#2a2a2a;transform:translate(-50%,-50%);">315.000 K</div>
<div class="a" style="left:480.60px;top:207.20px;width:62.60px;height:19.20px;background:#fff;border:0.7px solid #efefef;border-radius:4px;box-shadow:0 0 1px #f6f6f6"></div>
<div class="t m" style="left:511.90px;top:217.00px;font-size:9px;color:#2a2a2a;transform:translate(-50%,-50%);">2.500 K</div>
<div class="a" style="left:269.00px;top:371.80px;width:63.40px;height:19.00px;background:#fff;border:0.7px solid #efefef;border-radius:4px;box-shadow:0 0 1px #f6f6f6"></div>
<div class="t m" style="left:300.70px;top:381.50px;font-size:9px;color:#2a2a2a;transform:translate(-50%,-50%);">68.019 K</div>
<div class="a" style="left:480.60px;top:371.80px;width:62.60px;height:19.00px;background:#fff;border:0.7px solid #efefef;border-radius:4px;box-shadow:0 0 1px #f6f6f6"></div>
<div class="t m" style="left:511.90px;top:381.50px;font-size:9px;color:#2a2a2a;transform:translate(-50%,-50%);">0 K</div>
<div class="a" style="left:374.70px;top:207.00px;width:63.70px;height:19.20px;background:linear-gradient(#00ea00 0%,#00ea00 45%,#70ec70 68%,#c8f8c8 88%,#f4fff4 100%);border-radius:4px;border:none"></div>
<div class="t m" style="left:406.55px;top:216.80px;font-size:9px;color:#1a1a1a;transform:translate(-50%,-50%);">312.500 K</div>
<div class="a" style="left:269.00px;top:285.00px;width:63.40px;height:18.80px;background:linear-gradient(#00ea00 0%,#00ea00 45%,#70ec70 68%,#c8f8c8 88%,#f4fff4 100%);border-radius:4px;border:none"></div>
<div class="t m" style="left:300.70px;top:294.60px;font-size:9px;color:#1a1a1a;transform:translate(-50%,-50%);">246.981 K</div>
<div class="a" style="left:489.40px;top:285.00px;width:63.20px;height:18.80px;background:linear-gradient(#00ea00 0%,#00ea00 45%,#70ec70 68%,#c8f8c8 88%,#f4fff4 100%);border-radius:4px;border:none"></div>
<div class="t m" style="left:521.00px;top:294.60px;font-size:9px;color:#1a1a1a;transform:translate(-50%,-50%);">2.500 K</div>
<div class="a" style="left:371.70px;top:282.00px;width:69.00px;height:25.40px;background:linear-gradient(#00ea00 0%,#00ea00 45%,#70ec70 68%,#c8f8c8 88%,#f4fff4 100%);border-radius:4px;border:0.8px solid #8a8a8a"></div>
<div class="t m" style="left:406.20px;top:294.90px;font-size:9px;color:#1a1a1a;transform:translate(-50%,-50%);">244.481 K</div>
<div class="a" style="left:374.50px;top:371.80px;width:63.90px;height:19.00px;background:linear-gradient(#ff0e0e 0%,#ff0e0e 45%,#f07070 68%,#f8c8c8 88%,#fff4f4 100%);border-radius:4px;border:none"></div>
<div class="t m" style="left:406.45px;top:381.50px;font-size:9px;color:#1a1a1a;transform:translate(-50%,-50%);">-68.019 K</div>
<svg class="a" style="left:328.00px;top:211.90px;" width="51.80000000000001" height="10" viewBox="0 0 51.80000000000001 10"><path d="M5 5H42.80000000000001" stroke="#a0a0a0" stroke-width="1.9"/><path d="M46.80000000000001 5L38.80000000000001 1.4L41.30000000000001 5L38.80000000000001 8.6Z" fill="#a0a0a0"/></svg>
<svg class="a" style="left:433.30px;top:211.90px;" width="52.30000000000001" height="10" viewBox="0 0 52.30000000000001 10"><path d="M47.30000000000001 5H9.0" stroke="#a0a0a0" stroke-width="1.9"/><path d="M5.0 5L13.0 1.4L10.5 5L13.0 8.6Z" fill="#a0a0a0"/></svg>
<svg class="a" style="left:328.00px;top:289.60px;" width="48.69999999999999" height="10" viewBox="0 0 48.69999999999999 10"><path d="M5 5H39.69999999999999" stroke="#a0a0a0" stroke-width="1.9"/><path d="M43.69999999999999 5L35.69999999999999 1.4L38.19999999999999 5L35.69999999999999 8.6Z" fill="#a0a0a0"/></svg>
<svg class="a" style="left:435.70px;top:289.80px;" width="57.69999999999999" height="10" viewBox="0 0 57.69999999999999 10"><path d="M52.69999999999999 5H9.0" stroke="#a0a0a0" stroke-width="1.9"/><path d="M5.0 5L13.0 1.4L10.5 5L13.0 8.6Z" fill="#a0a0a0"/></svg>
<svg class="a" style="left:328.00px;top:376.20px;" width="51.60000000000002" height="10" viewBox="0 0 51.60000000000002 10"><path d="M5 5H42.60000000000002" stroke="#a0a0a0" stroke-width="1.9"/><path d="M46.60000000000002 5L38.60000000000002 1.4L41.10000000000002 5L38.60000000000002 8.6Z" fill="#a0a0a0"/></svg>
<svg class="a" style="left:433.30px;top:376.20px;" width="52.30000000000001" height="10" viewBox="0 0 52.30000000000001 10"><path d="M47.30000000000001 5H9.0" stroke="#a0a0a0" stroke-width="1.9"/><path d="M5.0 5L13.0 1.4L10.5 5L13.0 8.6Z" fill="#a0a0a0"/></svg>
<svg class="a" style="left:401.90px;top:221.40px;" width="10" height="33.0" viewBox="0 0 10 33.0"><path d="M5 5.0V24.0" stroke="#a0a0a0" stroke-width="1.9"/><path d="M5 28.0L1.4 20.0L5 22.5L8.6 20.0Z" fill="#a0a0a0"/></svg>
<svg class="a" style="left:401.90px;top:316.20px;" width="10" height="27.19999999999999" viewBox="0 0 10 27.19999999999999"><path d="M5 22.19999999999999V9.0" stroke="#a0a0a0" stroke-width="1.9"/><path d="M5 5.0L1.4 13.0L5 10.5L8.6 13.0Z" fill="#a0a0a0"/></svg>
</div>
</body></html>
